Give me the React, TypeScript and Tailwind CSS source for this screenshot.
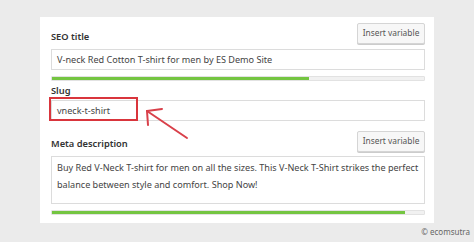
import React from "react";

function Bar({ pct }: { pct: number }) {
  return (
    <div className="h-[5px] w-full rounded-[1px] border border-[#e2e2e2] bg-[#f1f1f1] overflow-hidden">
      <div className="h-full bg-[#74c541]" style={{ width: `${pct}%` }} />
    </div>
  );
}

export default function App() {
  return (
    <div
      className="relative w-[474px] h-[242px] bg-[#ebebeb] overflow-hidden"
      style={{ fontFamily: '"Noto Sans", "Open Sans", sans-serif' }}
    >
      <div className="pt-[17px] pl-[40px]">
        <div className="w-[394px] h-[206px] bg-white pl-[11px] pr-[9px] pt-[6px] flex flex-col">
          <div className="flex items-center justify-between h-[21px]">
            <span className="text-[9.3px] font-semibold text-[#333] mt-[6px]">SEO title</span>
            <button className="h-[21px] w-[68px] text-[8.4px] text-[#555] bg-[#f7f7f7] border border-[#d5d5d5] rounded-[2px] shadow-[0_1px_0_#ccc]">
              Insert variable
            </button>
          </div>
          <div className="mt-[5px] h-[21px] border border-[#dcdcdc] flex items-center pl-[5px] text-[9.1px] text-[#444]">
            V-neck Red Cotton T-shirt for men by ES Demo Site
          </div>
          <div className="mt-[6px]">
            <Bar pct={69} />
          </div>
          <div className="mt-[4px] text-[9.3px] font-semibold text-[#333] leading-[12px]">Slug</div>
          <div className="mt-[3px] h-[21px] border border-[#dcdcdc] flex items-center pl-[5px] text-[9.1px] text-[#444]">
            vneck-t-shirt
          </div>
          <div className="mt-[9px] flex items-center justify-between h-[22px]">
            <span className="text-[9.3px] font-semibold text-[#333] mt-[5px]">Meta description</span>
            <button className="h-[21px] w-[68px] text-[8.4px] text-[#555] bg-[#f7f7f7] border border-[#d5d5d5] rounded-[2px] shadow-[0_1px_0_#ccc]">
              Insert variable
            </button>
          </div>
          <div className="mt-[4px] h-[48px] border border-[#dcdcdc] pl-[5px] pr-[1px] pt-[2px] text-[9.1px] leading-[17px] text-[#444]">
            Buy Red V-Neck T-shirt for men on all the sizes. This V-Neck T-Shirt strikes the perfect balance between style and comfort. Shop Now!
          </div>
          <div className="mt-[6px]">
            <Bar pct={95} />
          </div>
        </div>
      </div>
      <div className="absolute right-[4px] bottom-[4px] text-[8px] text-[#666]">© ecomsutra</div>
      <div className="absolute left-[49px] top-[97px] w-[89px] h-[24px] border-[2.5px] border-[#d9353c]" />
      <svg className="absolute left-0 top-0" width="474" height="242">
        <g stroke="#d9404a" strokeWidth="2" fill="none" strokeLinecap="round">
          <line x1="147" y1="111" x2="187" y2="138" />
          <line x1="147" y1="111" x2="162" y2="109" />
          <line x1="147" y1="111" x2="148" y2="125" />
        </g>
      </svg>
    </div>
  );
}
